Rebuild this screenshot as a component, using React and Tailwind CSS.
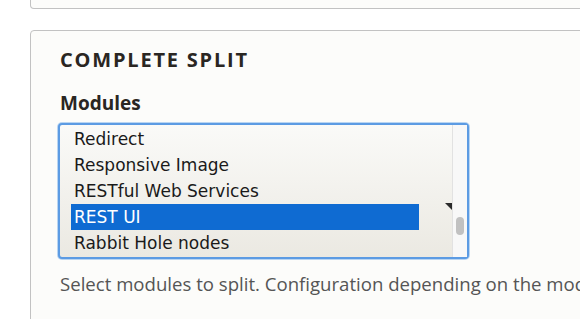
const OPTIONS = ['Redirect', 'Responsive Image', 'RESTful Web Services', 'REST UI', 'Rabbit Hole nodes']
const SELECTED = 'REST UI'

export default function App() {
  return (
    <div className="h-[319px] w-[580px] overflow-hidden bg-white font-['Open_Sans',sans-serif]">
      <div className="ml-[30px] mr-[-20px] h-[9px] rounded-b-[4px] border border-t-0 border-[#c2c2c2] bg-[#fcfcfa]" />

      <section className="ml-[30px] mr-[-20px] mt-[21px] h-[400px] rounded-t-[4px] border border-[#c2c2c2] bg-[#fcfcfa] pl-[29px] pt-[16px]">
        <h2 className="text-[20px] font-bold uppercase leading-[26px] tracking-[0.09em] text-[#2a2622]">
          Complete split
        </h2>

        <label className="mt-[18px] block text-[19px] font-bold leading-[24px] text-[#2a2622]">Modules</label>

        <div className="ml-[-3px] mt-[7px] w-[413px] rounded-[5px] bg-[#b9d5f2] p-px">
          <div className="flex h-[136px] rounded-[4px] border-2 border-[#5c9be3] bg-gradient-to-b from-[#fafaf8] to-[#ebe9e2]">
            <ul className="relative flex-1 pt-[1px] pl-[10px] font-['DejaVu_Sans',sans-serif] text-[17px] leading-[26px] text-[#1a1a1a]">
              {OPTIONS.map((opt) => (
                <li
                  key={opt}
                  className={
                    opt === SELECTED
                      ? 'ml-px w-[348px] bg-[#0f6bd2] pl-[3px] text-white'
                      : 'pl-[4px]'
                  }
                >
                  {opt}
                </li>
              ))}
              <svg className="absolute right-[-1px] top-[78px]" width="8" height="8" viewBox="0 0 8 8">
                <path d="M0 0 H8 V8 Z" fill="#2b2b2b" />
              </svg>
            </ul>
            <div className="relative w-[15px] border-l border-[#e2e2e2] bg-[#f8f8f8]">
              <div className="absolute left-[3px] top-[92px] h-[18px] w-[8px] rounded-full bg-[#c1c1c1]" />
            </div>
          </div>
        </div>

        <p className="mt-[12px] whitespace-nowrap text-[18.6px] leading-[24px] text-[#555]">
          Select modules to split. Configuration depending on the modules selected.
        </p>
      </section>
    </div>
  )
}
